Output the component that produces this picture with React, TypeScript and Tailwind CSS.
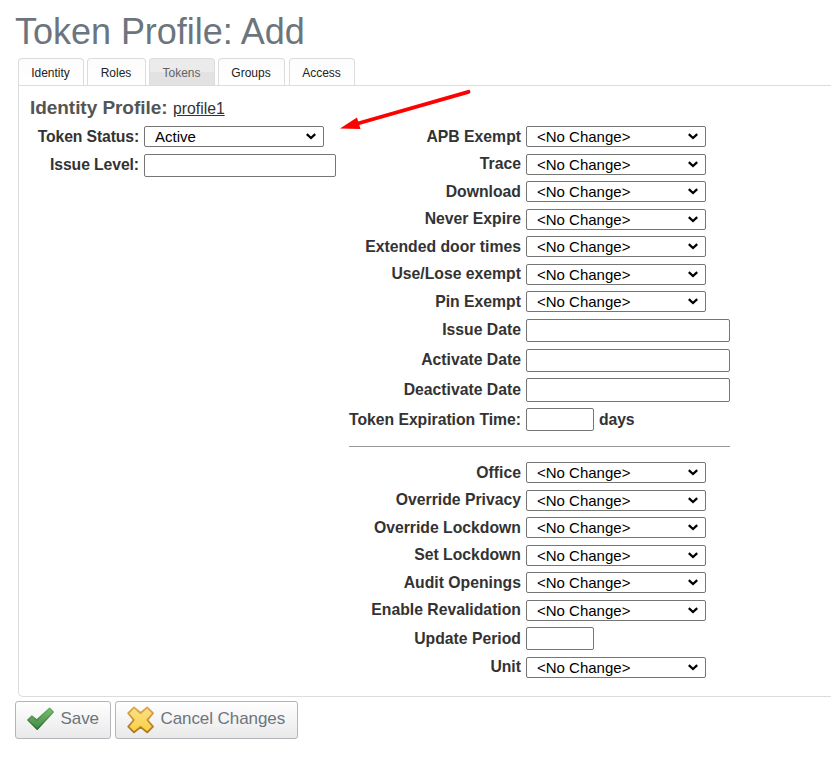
import { clsx } from "clsx";

const TABS = ["Identity", "Roles", "Tokens", "Groups", "Access"];

const TAB_WIDTHS: Record<string, string> = {
  Identity: "w-[66px]",
  Roles: "w-[59px]",
  Tokens: "w-[66px]",
  Groups: "w-[67px]",
  Access: "w-[66px]",
};

const EXEMPTIONS = [
  "APB Exempt",
  "Trace",
  "Download",
  "Never Expire",
  "Extended door times",
  "Use/Lose exempt",
  "Pin Exempt",
];

const DATES = ["Issue Date", "Activate Date", "Deactivate Date"];

const LOCK_OPTIONS = [
  "Office",
  "Override Privacy",
  "Override Lockdown",
  "Set Lockdown",
  "Audit Openings",
  "Enable Revalidation",
];

function Select({ value = "<No Change>" }: { value?: string }) {
  return (
    <div className="flex h-[21px] w-[180px] shrink-0 items-center justify-between rounded-[2px] border border-[#767676] bg-white pl-[10px] pr-[7px] text-[15px] leading-[19px] text-black">
      <span>{value}</span>
      <svg width="10" height="7" viewBox="0 0 10 7" fill="none">
        <path d="M0.8 1.2L5 5L9.2 1.2" stroke="#000" strokeWidth="2.3" />
      </svg>
    </div>
  );
}

function TextInput({ className }: { className: string }) {
  return <input type="text" className={clsx("block shrink-0 rounded-[2px] border border-[#767676] bg-white", className)} />;
}

function Label({ children, className }: { children: string; className: string }) {
  return (
    <label className={clsx("shrink-0 whitespace-nowrap text-right text-[15.75px] font-bold leading-[20px] text-[#333]", className)}>
      {children}
    </label>
  );
}

function SelectRow({ label }: { label: string }) {
  return (
    <div className="flex h-[27.5px] gap-[5px]">
      <Label className="w-[172px] pt-[0.8px]">{label}</Label>
      <Select />
    </div>
  );
}

function CheckIcon() {
  return (
    <svg width="28" height="28" viewBox="0 0 28 28" className="mb-[2px]">
      <defs>
        <linearGradient id="check" x1="0" y1="0" x2="0" y2="1">
          <stop offset="0" stopColor="#7dbd74" />
          <stop offset="1" stopColor="#3d8a3e" />
        </linearGradient>
        <linearGradient id="checkEdge" x1="0" y1="0" x2="0" y2="1">
          <stop offset="0" stopColor="#6fb267" />
          <stop offset="1" stopColor="#2b6a30" />
        </linearGradient>
      </defs>
      <path
        d="M0.9 15L4.8 11.2L9.8 15.2L22.6 3.4L26.2 7L10.2 24.2Z"
        fill="url(#check)"
        stroke="url(#checkEdge)"
        strokeWidth="1.6"
        strokeLinejoin="round"
      />
    </svg>
  );
}

function CrossIcon() {
  return (
    <svg width="28" height="28" viewBox="0 0 28 28" className="mb-px">
      <defs>
        <linearGradient id="cross" x1="0" y1="0" x2="0" y2="1">
          <stop offset="0" stopColor="#fbe08a" />
          <stop offset="1" stopColor="#f9d03f" />
        </linearGradient>
        <linearGradient id="crossEdge" x1="0" y1="0" x2="0" y2="1">
          <stop offset="0" stopColor="#dfa94e" />
          <stop offset="1" stopColor="#a87420" />
        </linearGradient>
      </defs>
      <path
        d="M7 1.4L13.6 7L20.2 1.4L26 7.2L20.4 14L26 20.6L20.2 26.4L13.6 21L7 26.4L1.2 20.6L6.8 14L1.2 7.2Z"
        fill="url(#cross)"
        stroke="url(#crossEdge)"
        strokeWidth="1.8"
        strokeLinejoin="round"
      />
    </svg>
  );
}

export default function App() {
  return (
    <main className="relative h-[763px] w-[831px] overflow-hidden bg-white font-['Liberation_Sans',Arial,sans-serif]">
      <h1 className="h-[58px] pl-[15px] pt-[11px] text-[36px] leading-[41px] tracking-[-0.03px] text-[#6c757d]">Token Profile: Add</h1>

      {/* Tabs */}
      <nav className="flex gap-[3px] pl-[18px]">
        {TABS.map((tab) => (
          <button
            key={tab}
            className={clsx(
              "h-[27px] rounded-t-[4px] border border-b-0 border-[#dcdcde] pr-px pt-[2px] text-[12px] leading-[24px]",
              TAB_WIDTHS[tab],
              tab === "Groups" && "mr-px",
              tab === "Tokens"
                ? "bg-linear-to-b from-[#ebebeb] from-50% to-[#e2e2e2] to-50% text-[#636363]"
                : "bg-linear-to-b from-[#fcfcfd] to-white text-[#222]",
            )}
          >
            {tab}
          </button>
        ))}
      </nav>

      <section className="ml-[18px] h-[612px] rounded-bl-[5px] border border-r-0 border-[#dcdcde]">
        <div className="flex h-[40px] items-baseline gap-[6px] pl-[11px] pt-[9px]">
          <h2 className="w-[137px] whitespace-nowrap text-[19px] font-bold leading-[26px] tracking-[-0.05px] text-[#555]">Identity Profile:</h2>
          <a className="text-[15.75px] leading-[20px] text-[#333] underline" href="#">profile1</a>
        </div>

        <div className="flex">
          <div className="w-[330px] shrink-0">
            <div className="flex h-[28px] gap-[5px]">
              <Label className="w-[120px] pt-px tracking-[-0.13px]">Token Status:</Label>
              <Select value="Active" />
            </div>
            <div className="flex gap-[5px]">
              <Label className="w-[120px] pt-px tracking-[-0.1px]">Issue Level:</Label>
              <TextInput className="h-[23px] w-[192px]" />
            </div>
          </div>

          <div className="w-[381px]">
            {EXEMPTIONS.map((label) => (
              <SelectRow key={label} label={label} />
            ))}
            <div className="pt-[0.4px]">
              {DATES.map((label) => (
                <div key={label} className="flex h-[29.75px] gap-[5px]">
                  <Label className="w-[172px] pt-[1.2px]">{label}</Label>
                  <TextInput className="h-[23.25px] w-[204px]" />
                </div>
              ))}
            </div>
            <div className="flex h-[37.85px] gap-[5px]">
              <Label className="w-[172px] pt-[1.6px] tracking-[-0.03px]">Token Expiration Time:</Label>
              <TextInput className="h-[23.25px] w-[68px]" />
              <Label className="w-[35px] pt-[1.6px] tracking-[-0.1px]">days</Label>
            </div>
            <hr className="mb-[15.1px] border-t border-[#999]" />
            {LOCK_OPTIONS.map((label) => (
              <SelectRow key={label} label={label} />
            ))}
            <div className="flex h-[29.6px] gap-[5px]">
              <Label className="w-[172px] pt-[1.5px]">Update Period</Label>
              <TextInput className="h-[23px] w-[68px]" />
            </div>
            <SelectRow label="Unit" />
          </div>
        </div>
      </section>

      {/* Actions */}
      <div className="flex gap-[4px] pl-[15px] pt-[4px] text-[17px] tracking-[-0.08px] text-[#6c757d]">
        <button className="flex h-[38px] w-[96px] items-center gap-[6px] rounded-[3px] border border-[#b3b5bb] bg-linear-to-b from-white to-[#e9e9e9] pl-[10.5px]">
          <CheckIcon />
          <span className="relative -top-px">Save</span>
        </button>
        <button className="flex h-[38px] w-[183px] items-center gap-[6px] whitespace-nowrap rounded-[3px] border border-[#b3b5bb] bg-linear-to-b from-white to-[#e9e9e9] pl-[10.5px]">
          <CrossIcon />
          <span className="relative -top-px">Cancel Changes</span>
        </button>
      </div>

      {/* Arrow pointing at the token status */}
      <svg className="pointer-events-none absolute left-[338px] top-[86px]" width="136" height="48" viewBox="0 0 136 48">
        <path d="M130.5 5.8L18 38" stroke="#f00" strokeWidth="3.9" strokeLinecap="round" />
        <path d="M2 42.5L19 31.5L22.5 43Z" fill="#f00" />
      </svg>
    </main>
  );
}
